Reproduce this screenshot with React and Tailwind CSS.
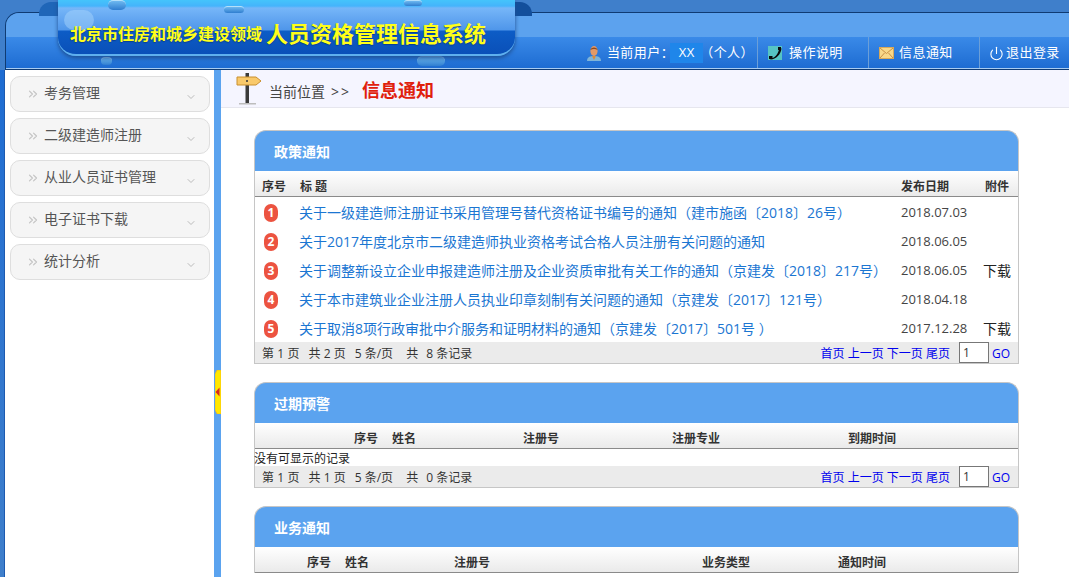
import { ChevronDown, ChevronsRight, Power } from "lucide-react";

const menus = ["考务管理", "二级建造师注册", "从业人员证书管理", "电子证书下载", "统计分析"];

const notices = [
  { title: "关于一级建造师注册证书采用管理号替代资格证书编号的通知（建市施函〔2018〕26号）", date: "2018.07.03", down: false },
  { title: "关于2017年度北京市二级建造师执业资格考试合格人员注册有关问题的通知", date: "2018.06.05", down: false },
  { title: "关于调整新设立企业申报建造师注册及企业资质审批有关工作的通知（京建发〔2018〕217号）", date: "2018.06.05", down: true },
  { title: "关于本市建筑业企业注册人员执业印章刻制有关问题的通知（京建发〔2017〕121号）", date: "2018.04.18", down: false },
  { title: "关于取消8项行政审批中介服务和证明材料的通知（京建发〔2017〕501号 ）", date: "2017.12.28", down: true },
];

const Bubble = ({ className }) => (
  <div className={`absolute rounded-full bg-gradient-to-b from-[#6db8f0] to-[#2f7ed0] border-t border-[#b5e0fa] ${className}`} />
);

const Banner = () => (
  <div className="absolute left-[39px] top-0 w-[493px] h-[66px]">
    <div className="absolute left-0 top-[2px] w-[22px] h-[14px] rounded-tl-xl bg-[#1f66b8]" />
    <div className="absolute right-0 top-[2px] w-[22px] h-[14px] rounded-tr-xl bg-[#134f9c]" />
    <Bubble className="left-[62px] bottom-[1px] w-[11px] h-[8px]" />
    <Bubble className="left-[378px] bottom-0 w-[28px] h-[10px]" />
    <div className="absolute left-[19px] right-[17px] top-0 h-[56px] rounded-b-[18px] bg-[linear-gradient(180deg,#44c4fb_0px,#44b4fb_6px,#76b6f8_8px,#4f96ea_30px,#0d5cc6_31px,#0a50b8_100%)] border-b-2 border-[#5fb0ee] shadow-[0_2px_4px_#1d4f92]">
      <Bubble className="left-[50px] top-0 w-[18px] h-[10px]" />
      <Bubble className="left-[166px] top-[6px] w-[20px] h-[7px]" />
      <Bubble className="left-[346px] top-0 w-[18px] h-[6px]" />
      <div className="absolute left-[6px] top-[10px] w-[30px] h-[20px] rounded-full bg-[#a5d4fb]/50" />
      <div className="relative flex items-end h-[47px] pl-[12px] text-[#ffff19] font-bold whitespace-nowrap [text-shadow:0_1px_1px_#0a3f8f]">
        <span className="text-[16px] leading-[26px]">北京市住房和城乡建设领域</span>
        <span className="text-[22px] leading-[28px] ml-[4px]">人员资格管理信息系统</span>
      </div>
    </div>
  </div>
);

const UserIcon = () => (
  <svg width="16" height="17" viewBox="0 0 16 17">
    <path d="M1 16c0-4 3-5 7-5s7 1 7 5z" fill="#7eb4d8" />
    <path d="M6 11l2 4 2-4z" fill="#d88a3c" />
    <ellipse cx="8" cy="6" rx="3.6" ry="5" fill="#e39a68" />
    <path d="M4.4 5C4.6 1.5 11.4 1.5 11.6 5 9.5 3.6 6.5 3.6 4.4 5z" fill="#8a4a22" />
  </svg>
);

const PhoneIcon = () => (
  <svg width="14" height="14" viewBox="0 0 14 14">
    <rect width="14" height="14" fill="#56c4c4" />
    <path d="M1.5 11.5c3 2.5 8-1.5 9.5-8l.5-2 2 1C13 8 8 13.5 2.5 13.5z" fill="#0b0b0b" />
    <rect x="10" y="1" width="3" height="3" fill="#0b0b0b" />
    <rect x="1" y="10" width="3.5" height="3" fill="#0b0b0b" />
  </svg>
);

const MailIcon = () => (
  <svg width="15" height="12" viewBox="0 0 15 12">
    <rect x="0.5" y="0.5" width="14" height="11" fill="#f8d889" stroke="#d8a95a" />
    <path d="M1 1l6.5 5.5L14 1M1 11l4.5-5M14 11L9.5 6" fill="none" stroke="#c78f45" />
  </svg>
);

const Header = () => (
  <div className="relative h-[70px] shrink-0 bg-[#3f7fcb]">
    <div className="h-[12px]" />
    <div className="h-[58px] ml-[5px] rounded-tl-[14px] border-t border-l border-b border-[#0f3b73] flex flex-col overflow-hidden">
      <div className="h-[24px] shrink-0 bg-[#5ca2ee]" />
      <div className="flex-1 flex justify-end items-stretch bg-gradient-to-b from-[#3a8ae8] to-[#1d6cd2] border-b border-[#a9cdf2] text-white text-[13px] tracking-[0.45px]">
        <div className="flex items-center pr-[3px] pt-[1px]">
          <UserIcon />
          <span className="ml-[5px] -mr-[4px]">当前用户：</span>
          <span className="relative bg-[#1f86ea] w-[33px] text-center">XX</span>
          <span className="-ml-[3px]">（个人）</span>
        </div>
        <div className="w-[111px] border-l border-[#6b9fd8] flex items-center pl-[10px] pt-[1px] gap-[7px]">
          <PhoneIcon />
          <span>操作说明</span>
        </div>
        <div className="w-[111px] border-l border-[#6b9fd8] flex items-center pl-[10px] pt-[1px] gap-[5px]">
          <MailIcon />
          <span>信息通知</span>
        </div>
        <div className="w-[90px] border-l border-[#6b9fd8] flex items-center pl-[9px] pt-[1px] gap-[2px]">
          <Power size={15} strokeWidth={1.75} />
          <span>退出登录</span>
        </div>
      </div>
    </div>
    <Banner />
  </div>
);

const Sidebar = () => (
  <div className="w-[209px] shrink-0 bg-white pt-[6px] pl-[5px] pr-[4px] flex flex-col gap-[6px]">
    {menus.map((m) => (
      <div
        key={m}
        className="h-[36px] rounded-[10px] border border-[#dedede] bg-[#f5f5f5] flex items-center pl-[15px] pr-[12px] text-[14px] text-[#555]"
      >
        <ChevronsRight size={14} className="text-[#c4c4c4] mr-[4px]" />
        <span className="flex-1 pb-[3px]">{m}</span>
        <ChevronDown size={12} className="text-[#bbb] mt-[6px]" />
      </div>
    ))}
  </div>
);

const SignPost = () => (
  <svg width="26" height="32" viewBox="0 0 26 32">
    <rect x="9.5" y="0" width="3.5" height="30" fill="#3a3a3a" />
    <rect x="3" y="30" width="17" height="1.5" fill="#bdbdbd" />
    <path d="M1 4h19l5 4-5 4H1z" fill="#f9c96b" stroke="#c98f2f" />
    <circle cx="11" cy="8" r="1" fill="#333" />
  </svg>
);

const PanelTitle = ({ children }) => (
  <div className="h-[41px] rounded-t-[12px] bg-[#5ba3ef] border-t border-x border-[#c6c6c6] flex items-center pl-[19px] pt-[1px] text-white text-[14px] font-bold">
    {children}
  </div>
);

const HeadRow = ({ children }) => (
  <div className="relative h-[26px] pt-[6px] bg-gradient-to-b from-white to-[#eaeaea] border-b border-[#8a8a8a] text-[12px] font-bold text-[#333] flex items-center">
    {children}
  </div>
);

const Pager = ({ total, pages }) => (
  <div className="h-[21px] pt-[2px] bg-[#ebebeb] flex items-center pl-[7px] pr-[8px] text-[12px] text-[#333]">
    <span className="tracking-[0.1px]">第 1 页</span>
    <span className="ml-[9px]">共 {pages} 页</span>
    <span className="ml-[9px]">5 条/页</span>
    <span className="ml-[13px]">共</span>
    <span className="ml-[8px]">{total} 条记录</span>
    <span className="ml-auto text-[#0000ee]">首页 上一页 下一页 尾页</span>
    <div className="ml-[9px] -mt-[2px] w-[30px] h-[21px] shrink-0 bg-white border border-[#777] pl-[3px] leading-[19px] text-[#333]">1</div>
    <span className="ml-[3px] text-[#0000ee]">GO</span>
  </div>
);

const PolicyPanel = () => (
  <div>
    <PanelTitle>政策通知</PanelTitle>
    <div className="border-x border-b border-[#c6c6c6]">
      <HeadRow>
        <span className="w-[38px] text-center">序号</span>
        <span className="ml-[7px] flex-1">标 题</span>
        <span className="w-[84px]">发布日期</span>
        <span className="w-[33px]">附件</span>
      </HeadRow>
      <div>
        {notices.map((n, i) => (
          <div key={n.date + i} className="h-[29px] pt-[2px] flex items-center text-[14px]">
            <span className="ml-[9px] w-[14px] h-[18px] rounded-full bg-[#ec5340] text-white text-[12px] font-bold leading-[18px] text-center shrink-0">
              {i + 1}
            </span>
            <span className="ml-[21px] flex-1 text-[#1b76d2] whitespace-nowrap">{n.title}</span>
            <span className="w-[82px] text-[13px] text-[#444]">{n.date}</span>
            <span className="w-[35px] text-[#222]">{n.down ? "下载" : ""}</span>
          </div>
        ))}
      </div>
      <Pager total="8" pages="2" />
    </div>
  </div>
);

const ExpirePanel = () => (
  <div className="mt-[18px]">
    <PanelTitle>过期预警</PanelTitle>
    <div className="border-x border-b border-[#c6c6c6]">
      <HeadRow>
        <span className="ml-[99px] w-[38px]">序号</span>
        <span className="w-[131px]">姓名</span>
        <span className="w-[149px]">注册号</span>
        <span className="w-[176px]">注册专业</span>
        <span>到期时间</span>
      </HeadRow>
      <div className="h-[17px] -ml-[1px] text-[12px] leading-[19px] text-[#222]">没有可显示的记录</div>
      <Pager total="0" pages="1" />
    </div>
  </div>
);

const BusinessPanel = () => (
  <div className="mt-[18px]">
    <PanelTitle>业务通知</PanelTitle>
    <div className="border-x border-[#c6c6c6]">
      <HeadRow>
        <span className="ml-[52px] w-[38px]">序号</span>
        <span className="w-[109px]">姓名</span>
        <span className="w-[248px]">注册号</span>
        <span className="w-[136px]">业务类型</span>
        <span>通知时间</span>
      </HeadRow>
    </div>
  </div>
);

export default function App() {
  return (
    <div
      className="w-[1069px] h-[577px] overflow-hidden flex flex-col bg-white"
      style={{ fontFamily: '"Open Sans", "Noto Sans CJK SC", sans-serif' }}
    >
      <Header />
      <div className="flex-1 flex min-h-0">
        <div className="w-[5px] shrink-0 bg-gradient-to-b from-[#1d6cd2] to-[#3f7fcb] border-r border-[#1d5ab0]" />
        <Sidebar />
        <div className="relative w-[7px] shrink-0 bg-[#5ba3ef]">
          <svg className="absolute left-[1px] top-[300px]" width="6" height="44" viewBox="0 0 6 44">
            <path d="M2 0l4 0v44H2L0 40V4z" fill="#ffe800" stroke="#f0a020" strokeWidth="0.5" />
            <path d="M0.5 22l4-4.5v9z" fill="#d8281c" />
          </svg>
        </div>
        <div className="flex-1 min-w-0">
          <div className="h-[38px] bg-[#f5f5ff] border-b border-[#e6e6ee] flex items-center pl-[15px]">
            <SignPost />
            <span className="ml-[7px] mt-[5px] text-[14px] text-[#444]">当前位置</span>
            <span className="ml-[6px] mt-[5px] text-[14px] text-[#444] tracking-[2px]">&gt;&gt;</span>
            <span className="ml-[11px] mt-[3px] text-[18px] font-bold text-[#e0200c]">信息通知</span>
          </div>
          <div className="pt-[22px] pl-[33px] pr-[50px]">
            <PolicyPanel />
            <ExpirePanel />
            <BusinessPanel />
          </div>
        </div>
      </div>
    </div>
  );
}
